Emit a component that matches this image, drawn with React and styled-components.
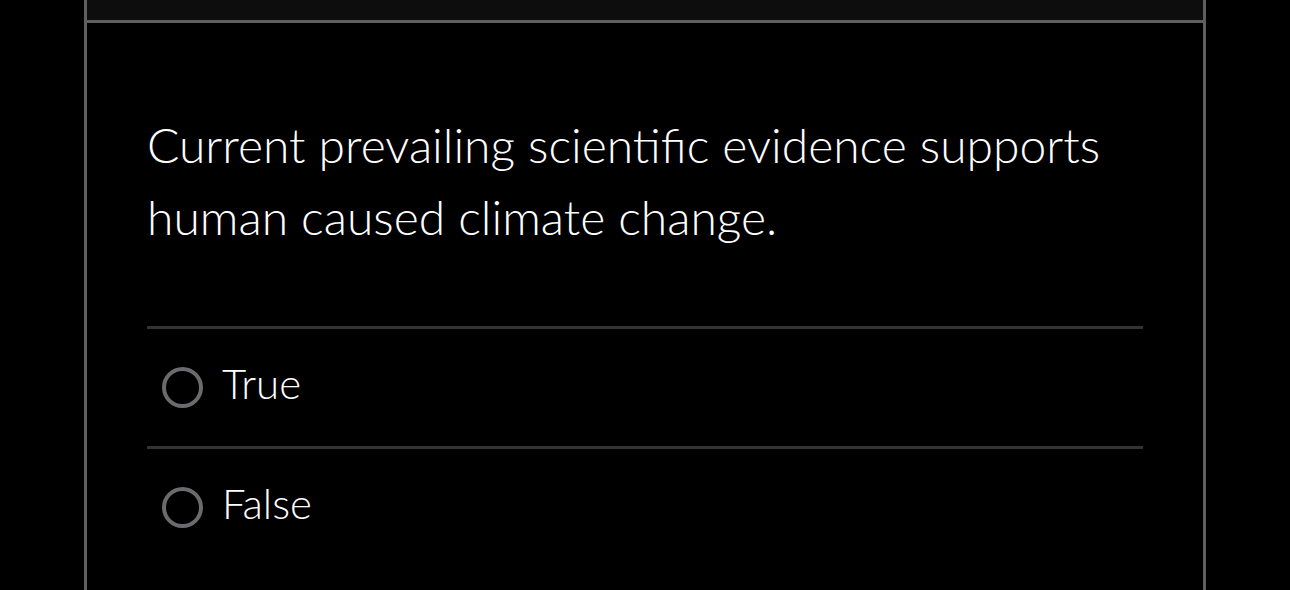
import React from "react";
import styled, { createGlobalStyle } from "styled-components";

const Global = createGlobalStyle`
  html, body { margin: 0; padding: 0; background: #000; }
  body { font-family: Lato, "Open Sans", sans-serif; color: #fff; }
`;

const Page = styled.div`
  display: flex;
  justify-content: flex-start;
  padding-left: 84px;
  width: 1290px;
  box-sizing: border-box;
  height: 590px;
  overflow: hidden;
`;

const Card = styled.div`
  width: 1122px;
  border-left: 3px solid #5f5f5f;
  border-right: 3px solid #5f5f5f;
  box-sizing: border-box;
  display: flex;
  flex-direction: column;
`;

const Header = styled.div`
  height: 20px;
  background: #0d0d0d;
  border-bottom: 3px solid #5f5f5f;
`;

const Body = styled.div`
  padding: 86px 60px 0 60px;
`;

const Question = styled.p`
  margin: 0 0 73px 0;
  font-size: 48px;
  font-weight: 300;
  line-height: 72px;
  color: #fff;
`;

const Option = styled.label`
  display: flex;
  align-items: center;
  gap: 19px;
  height: 117px;
  padding-left: 15px;
  border-top: 3px solid #333;
  box-sizing: content-box;
`;

const Radio = styled.span`
  width: 41px;
  height: 41px;
  border-radius: 50%;
  border: 4px solid #6b6b6d;
  box-sizing: border-box;
  flex: none;
`;

const OptionText = styled.span`
  font-size: 42px;
  font-weight: 300;
  line-height: 50px;
  padding-bottom: 10px;
  color: #fff;
`;

export default function App() {
  return (
    <>
      <Global />
      <Page>
        <Card>
          <Header />
          <Body>
            <Question>
              Current prevailing scientific evidence supports human caused climate change.
            </Question>
            <Option>
              <Radio />
              <OptionText>True</OptionText>
            </Option>
            <Option>
              <Radio />
              <OptionText>False</OptionText>
            </Option>
          </Body>
        </Card>
      </Page>
    </>
  );
}
